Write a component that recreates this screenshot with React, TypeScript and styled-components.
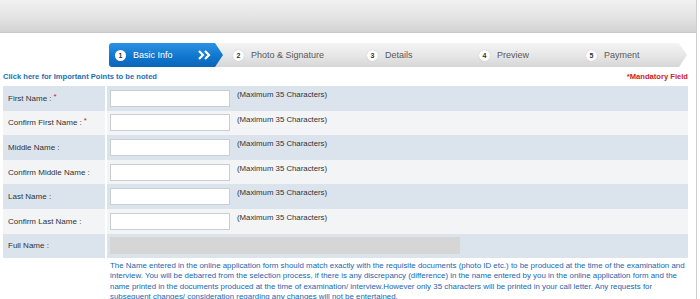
import React from "react";
import styled, { createGlobalStyle } from "styled-components";

const Global = createGlobalStyle`
  html, body { margin: 0; padding: 0; background: #ffffff; }
  body { font-family: "Liberation Sans", Arial, sans-serif; }
`;

const Page = styled.div`
  width: 696px;
  min-height: 299px;
  border-right: 1px solid #cfcfcf;
  background: #fff;
  overflow: hidden;
`;

const Banner = styled.div`
  height: 32px;
  background: linear-gradient(to bottom, #f1f1f1 0%, #e3e3e3 55%, #d2d2d2 100%);
  border-bottom: 1px solid #c9c9c9;
`;

const Stepper = styled.div`
  display: flex;
  padding-left: 109px;
  margin-top: 10px;
  height: 24px;
`;

const Step = styled.div<{ $w: number; $active?: boolean; $first?: boolean }>`
  width: ${(p) => p.$w}px;
  height: 24px;
  margin-left: ${(p) => (p.$first ? 0 : -9)}px;
  display: flex;
  align-items: center;
  padding-left: ${(p) => (p.$first ? 6 : 19)}px;
  box-sizing: border-box;
  font-size: 9px;
  color: ${(p) => (p.$active ? "#ffffff" : "#5a5a5a")};
  background: ${(p) =>
    p.$active
      ? "linear-gradient(to bottom, #2b93e3 0%, #0f74cc 60%, #0a66b8 100%)"
      : "linear-gradient(to bottom, #f4f4f4 0%, #e6e6e6 55%, #d6d6d6 100%)"};
  border-radius: ${(p) => (p.$first ? "3px 0 0 3px" : "0")};
  clip-path: ${(p) =>
    p.$first
      ? "polygon(0 0, calc(100% - 8px) 0, 100% 50%, calc(100% - 8px) 100%, 0 100%)"
      : "polygon(0 0, calc(100% - 8px) 0, 100% 50%, calc(100% - 8px) 100%, 0 100%, 8px 50%)"};
  position: relative;
  z-index: ${(p) => (p.$active ? 2 : 1)};
`;

const Num = styled.span<{ $active?: boolean }>`
  width: 11px;
  height: 11px;
  border-radius: 50%;
  background: #ffffff;
  color: #333;
  font-size: 7px;
  font-weight: bold;
  display: inline-flex;
  align-items: center;
  justify-content: center;
  margin-right: 7px;
  flex-shrink: 0;
  box-shadow: ${(p) => (p.$active ? "none" : "0 0 1px rgba(0,0,0,0.25)")};
`;

const StepLabel = styled.span`
  flex: 1;
  white-space: nowrap;
`;

const Chevrons = styled.svg`
  margin-right: 12px;
  flex-shrink: 0;
`;

const InfoBar = styled.div`
  display: flex;
  justify-content: space-between;
  align-items: center;
  padding: 0 8px 0 3px;
  height: 19px;
  font-size: 7.6px;
  font-weight: bold;
`;

const InfoLink = styled.a`
  color: #1d6fb3;
  text-decoration: none;
`;

const Mandatory = styled.span`
  color: #d0202a;
`;

const Form = styled.div`
  margin-left: 3px;
  width: 685px;
`;

const Row = styled.div<{ $shade: boolean }>`
  display: grid;
  grid-template-columns: 102px 1fr;
  column-gap: 2px;
  height: 24.6px;
  background: #ffffff;
  & > div {
    background: ${(p) => (p.$shade ? "#dbe4ec" : "#f2f4f6")};
  }
`;

const LabelCell = styled.div`
  display: flex;
  align-items: center;
  padding-left: 5px;
  font-size: 8px;
  color: #333;
`;

const Star = styled.span`
  color: #d0202a;
  margin-left: 2px;
  position: relative;
  top: -2px;
`;

const FieldCell = styled.div`
  display: flex;
  align-items: center;
  padding-left: 3px;
`;

const TextBox = styled.input`
  width: 120px;
  height: 17px;
  box-sizing: border-box;
  border: 1px solid #c9ced3;
  background: #ffffff;
  margin: 0;
  padding: 0 3px;
  font-size: 8px;
  outline: none;
`;

const GreyBox = styled.div`
  width: 350px;
  height: 17px;
  background: #d6d6d6;
`;

const Hint = styled.span`
  align-self: flex-start;
  padding-top: 4px;
  margin-left: 7px;
  font-size: 7.8px;
  color: #333;
`;

const Note = styled.p`
  margin: 3px 0 0 107px;
  width: 580px;
  font-size: 7.9px;
  line-height: 10.2px;
  color: #2166b0;
`;

const steps = [
  { n: 1, label: "Basic Info", w: 114 },
  { n: 2, label: "Photo & Signature", w: 143 },
  { n: 3, label: "Details", w: 121 },
  { n: 4, label: "Preview", w: 116 },
  { n: 5, label: "Payment", w: 120 },
];

const fields = [
  { label: "First Name :", req: true },
  { label: "Confirm First Name :", req: true },
  { label: "Middle Name :", req: false },
  { label: "Confirm Middle Name :", req: false },
  { label: "Last Name :", req: false },
  { label: "Confirm Last Name :", req: false },
];

export default function App() {
  return (
    <Page>
      <Global />
      <Banner />
      <Stepper>
        {steps.map((s, i) => (
          <Step key={s.n} $w={s.w} $active={i === 0} $first={i === 0}>
            <Num $active={i === 0}>{s.n}</Num>
            <StepLabel>{s.label}</StepLabel>
            {i === 0 && (
              <Chevrons width="13" height="10" viewBox="0 0 13 10">
                <polyline points="1,1 5,5 1,9" fill="none" stroke="#fff" strokeWidth="2.2" />
                <polyline points="7,1 11,5 7,9" fill="none" stroke="#fff" strokeWidth="2.2" />
              </Chevrons>
            )}
          </Step>
        ))}
      </Stepper>
      <InfoBar>
        <InfoLink href="#">Click here for Important Points to be noted</InfoLink>
        <Mandatory>*Mandatory Field</Mandatory>
      </InfoBar>
      <Form>
        {fields.map((f, i) => (
          <Row key={f.label} $shade={i % 2 === 0}>
            <LabelCell>
              {f.label}
              {f.req && <Star>*</Star>}
            </LabelCell>
            <FieldCell>
              <TextBox type="text" />
              <Hint>(Maximum 35 Characters)</Hint>
            </FieldCell>
          </Row>
        ))}
        <Row $shade={true}>
          <LabelCell>Full Name :</LabelCell>
          <FieldCell>
            <GreyBox />
          </FieldCell>
        </Row>
        <Note>
          The Name entered in the online application form should match exactly with the requisite documents (photo ID etc.) to be produced at the time of the examination and interview. You will be debarred from the selection process, if there is any discrepancy (difference) in the name entered by you in the online application form and the name printed in the documents produced at the time of examination/ interview.However only 35 characters will be printed in your call letter. Any requests for subsequent changes/ consideration regarding any changes will not be entertained.
        </Note>
      </Form>
    </Page>
  );
}
